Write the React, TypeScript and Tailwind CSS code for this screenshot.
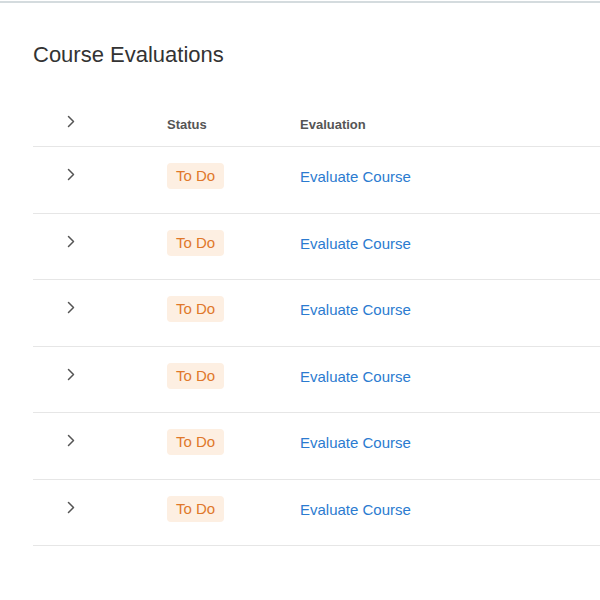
const rows = Array.from({ length: 6 }, (_, i) => i);

function Chevron() {
  return (
    <svg width="8" height="13" viewBox="0 0 8 13" fill="none" className="text-[#555]">
      <path d="M1.5 1.5 L6.5 6.5 L1.5 11.5" stroke="currentColor" strokeWidth="1.5" strokeLinecap="round" strokeLinejoin="round" />
    </svg>
  );
}

export default function App() {
  return (
    <div className="h-[600px] w-[600px] overflow-hidden bg-white font-['Liberation_Sans',Arial,sans-serif]">
      <div className="mt-px h-[2px] bg-[#d4dbde]" />
      <div className="pl-[33px]">
        <h1 className="mt-[38px] text-[22px] leading-[28px] text-[#333]">Course Evaluations</h1>
        <div className="mt-[31px]">
          <div className="grid h-[47px] grid-cols-[134px_133px_1fr] items-center border-b border-[#e6e6e6]">
            <div className="pb-[3px] pl-[34px]"><Chevron /></div>
            <div className="pt-[3px] text-[13px] font-bold text-[#555]">Status</div>
            <div className="pt-[3px] text-[13px] font-bold text-[#555]">Evaluation</div>
          </div>
          {rows.map((r) => (
            <div key={r} className="grid h-[66.5px] grid-cols-[134px_133px_1fr] items-center border-b border-[#e6e6e6] pb-[7px]">
              <div className="pb-[3px] pl-[34px]"><Chevron /></div>
              <div>
                <span className="inline-block rounded-[4px] bg-[#fdefe2] px-[9px] py-[4px] text-[15px] leading-[18px] text-[#e0782a]">To Do</span>
              </div>
              <div className="pt-[2px]">
                <a href="#" className="text-[15px] text-[#2b7bd0]">Evaluate Course</a>
              </div>
            </div>
          ))}
        </div>
      </div>
    </div>
  );
}
